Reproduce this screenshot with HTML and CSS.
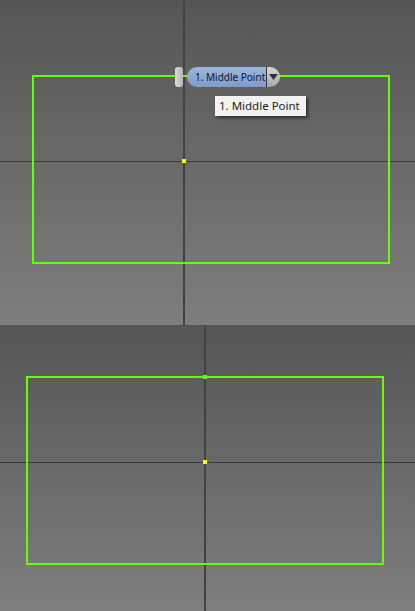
FILE: index.html
```html
<!DOCTYPE html>
<html lang="en">
<head>
  <meta charset="UTF-8">
  <title>Sketch Middle Point</title>
  <link rel="stylesheet" href="styles.css">
</head>
<body>
  <div class="viewport viewport-top">
    <svg class="sketch" width="415" height="325" viewBox="0 0 415 325">
      <path class="axis-v" d="M184 0V325"/>
      <path class="axis-h" d="M0 161.500H415"/>
      <rect class="profile" x="33" y="76" width="356" height="187"/>
      <rect class="point" x="182" y="159" width="4" height="4"/>
    </svg>
    <div class="grip"></div>
    <div class="selector">
      <span class="selector-label">1. Middle Point</span>
      <span class="selector-arrow">
        <svg width="9" height="6" viewBox="0 0 9 6"><path d="M0 0H9L4.500 6Z"/></svg>
      </span>
    </div>
    <div class="tooltip">1. Middle Point</div>
  </div>
  <div class="viewport viewport-bottom">
    <svg class="sketch" width="415" height="286" viewBox="0 0 415 286">
      <path class="axis-v" d="M205 0V286"/>
      <path class="axis-h" d="M0 137.500H415"/>
      <rect class="profile" x="27" y="52" width="356" height="187"/>
      <rect class="midpoint" x="203" y="50" width="4" height="4"/>
      <rect class="point" x="203" y="135" width="4" height="4"/>
    </svg>
  </div>
</body>
</html>
```

FILE: styles.css
```css
body {
  margin: 0;
  width: 415px;
  height: 611px;
  overflow: hidden;
  font-family: "Noto Sans", "Liberation Sans", sans-serif;
}

.viewport {
  position: relative;
  background: linear-gradient(to bottom, #555 0%, #7e7e7e 100%);
}

.viewport-top {
  height: 325px;
}

.viewport-bottom {
  height: 286px;
}

.sketch {
  display: block;
}

.axis-v {
  fill: none;
  stroke: #424242;
  stroke-width: 2;
}

.axis-h {
  fill: none;
  stroke: #3a3a3a;
  stroke-width: 1;
}

.profile {
  fill: none;
  stroke: #66ff00;
  stroke-width: 2;
}

.point {
  fill: #ffff00;
}

.midpoint {
  fill: #66ff00;
}

.grip {
  position: absolute;
  left: 175px;
  top: 67px;
  width: 8px;
  height: 20px;
  border-radius: 3px;
  background: linear-gradient(to right, #dcdcdc, #b4b4b4);
}

.selector {
  position: absolute;
  left: 187px;
  top: 67px;
  width: 93px;
  height: 20px;
  display: flex;
  border-radius: 10px;
  overflow: hidden;
  font-size: 10px;
}

.selector-label {
  flex: 1;
  display: flex;
  align-items: center;
  padding-left: 8px;
  color: #0c1238;
  white-space: nowrap;
  overflow: hidden;
  background: linear-gradient(to bottom, #9db6dc, #7f9cc8);
  border-right: 1px solid #333;
}

.selector-arrow {
  width: 13px;
  flex: none;
  display: flex;
  align-items: center;
  justify-content: center;
  padding-right: 1px;
  box-sizing: border-box;
  background: linear-gradient(to bottom, #d6d6d6, #a8a8a8);
}

.selector-arrow path {
  fill: #333;
}

.tooltip {
  position: absolute;
  left: 215px;
  top: 96px;
  width: 87px;
  height: 20px;
  padding-left: 4px;
  line-height: 20px;
  font-size: 11.5px;
  color: #222;
  white-space: nowrap;
  background: #f2f2f2;
  box-shadow: 2px 2px 3px rgba(0, 0, 0, 0.55);
}
```
